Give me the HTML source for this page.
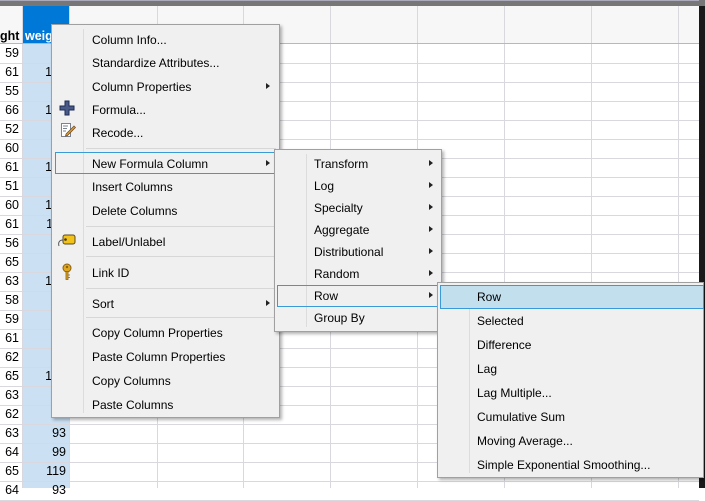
<!DOCTYPE html>
<html><head><meta charset="utf-8"><style>
*{margin:0;padding:0;box-sizing:border-box}
body{width:705px;height:488px;overflow:hidden;background:#fff;position:relative;font-family:"Liberation Sans",sans-serif;font-size:12px;color:#000}
.a{position:absolute}
.vl{position:absolute;top:6px;width:1px;height:482px;background:#d8d8de}
.hl{position:absolute;left:0;width:699px;height:1px;background:#d8d8de}
.n{position:absolute;text-align:right;font-size:12.5px;line-height:19px;height:19px}
.menu{position:absolute;background:#f0f0f0;border:1px solid #a0a0a0;box-shadow:2px 2px 3px rgba(0,0,0,.3)}
.it{position:absolute;font-size:12px;line-height:16px;white-space:nowrap}
.ar{position:absolute;width:0;height:0;border-top:3.5px solid transparent;border-bottom:3.5px solid transparent;border-left:4px solid #222}
.sep{position:absolute;height:1px;background:#d7d7d7}
</style></head><body>
<div class="a" style="left:0;top:0;width:705px;height:6px;background:#777"></div>
<div class="a" style="left:0;top:0;width:705px;height:1px;background:#aab"></div>
<div class="a" style="left:0;top:6px;width:699px;height:38px;background:#f7f7f7"></div>
<div class="a" style="left:22px;top:6px;width:47px;height:38px;background:#0078d7"></div>
<div class="a" style="left:22px;top:44px;width:47px;height:444px;background:#cce0f3"></div>
<div class="a" style="left:0;top:29px;font-weight:bold;font-size:12.5px">ght</div>
<div class="a" style="left:25px;top:29px;font-weight:bold;font-size:12.5px;color:#fff">weig</div>
<div class="vl" style="left:22px"></div><div class="vl" style="left:69px"></div><div class="vl" style="left:157px"></div><div class="vl" style="left:243px"></div><div class="vl" style="left:330px"></div><div class="vl" style="left:417px"></div><div class="vl" style="left:504px"></div><div class="vl" style="left:591px"></div><div class="vl" style="left:678px"></div>
<div class="a" style="left:0;top:43px;width:699px;height:1px;background:#b8b8b8"></div>
<div id="rows"></div>
<div class="a" style="left:699px;top:0;width:6px;height:488px;background:#1a1a1a"></div>
<div class="a" style="left:699px;top:0;width:6px;height:6px;background:#777"></div>

<!-- main menu -->
<div class="menu" style="left:51px;top:24px;width:229px;height:394px">
<div class="a" style="left:31px;top:4px;width:1px;height:384px;background:#dcdcdc"></div>
<div class="it" style="left:40px;top:7px">Column Info...</div>
<div class="it" style="left:40px;top:30px">Standardize Attributes...</div>
<div class="it" style="left:40px;top:54px">Column Properties</div><div class="ar" style="left:214px;top:58px"></div>
<svg class="a" style="left:7px;top:75px" width="16" height="16" viewBox="0 0 16 16"><path d="M6 1h4v5h5v4h-5v5H6v-5H1V6h5z" fill="#4a5a88" stroke="#1e2a55" stroke-width="1"/></svg>
<div class="it" style="left:40px;top:77px">Formula...</div>
<svg class="a" style="left:8px;top:97px" width="16" height="16" viewBox="0 0 16 16"><rect x="1.5" y="1.5" width="9" height="13" fill="#fff" stroke="#7a8290"/><path d="M3 4h5M3 6.5h4M3 9h3" stroke="#7a8290"/><path d="M6 12l8-8 1.5 1.5-8 8-2 .5z" fill="#d89a3a" stroke="#6a4a20" stroke-width=".7"/></svg>
<div class="it" style="left:40px;top:100px">Recode...</div>
<div class="sep" style="left:34px;top:123px;width:190px"></div>
<div class="a" style="left:3px;top:127px;width:220px;height:22px;border:1px solid #3a9ad8"></div>
<div class="it" style="left:40px;top:131px">New Formula Column</div><div class="ar" style="left:214px;top:135px"></div>
<div class="it" style="left:40px;top:154px">Insert Columns</div>
<div class="it" style="left:40px;top:178px">Delete Columns</div>
<div class="sep" style="left:34px;top:201px;width:190px"></div>
<svg class="a" style="left:5px;top:207px" width="20" height="16" viewBox="0 0 20 16"><rect x="6" y="3" width="12" height="9" rx="2" fill="#f2c21a" stroke="#5a4a20"/><circle cx="8.5" cy="7.5" r="1.3" fill="#333"/><path d="M6 8C2 8 1 11 2 14" fill="none" stroke="#555"/></svg>
<div class="it" style="left:40px;top:209px">Label/Unlabel</div>
<div class="sep" style="left:34px;top:231px;width:190px"></div>
<svg class="a" style="left:8px;top:238px" width="14" height="18" viewBox="0 0 14 18"><circle cx="7" cy="5" r="4" fill="#e0a820" stroke="#8a6010"/><circle cx="7" cy="4" r="1.2" fill="#8a6010"/><path d="M6 8.5h2v8H6zM8 12h2M8 14.5h2" stroke="#8a6010" fill="#e0a820" stroke-width=".8"/></svg>
<div class="it" style="left:40px;top:240px">Link ID</div>
<div class="sep" style="left:34px;top:263px;width:190px"></div>
<div class="it" style="left:40px;top:271px">Sort</div><div class="ar" style="left:214px;top:275px"></div>
<div class="sep" style="left:34px;top:292px;width:190px"></div>
<div class="it" style="left:40px;top:300px">Copy Column Properties</div>
<div class="it" style="left:40px;top:324px">Paste Column Properties</div>
<div class="it" style="left:40px;top:348px">Copy Columns</div>
<div class="it" style="left:40px;top:372px">Paste Columns</div>
</div>

<!-- submenu 1 -->
<div class="menu" style="left:274px;top:149px;width:168px;height:183px">
<div class="a" style="left:31px;top:4px;width:1px;height:173px;background:#dcdcdc"></div>
<div class="it" style="left:39px;top:6px">Transform</div><div class="ar" style="left:154px;top:10px"></div>
<div class="it" style="left:39px;top:28px">Log</div><div class="ar" style="left:154px;top:32px"></div>
<div class="it" style="left:39px;top:50px">Specialty</div><div class="ar" style="left:154px;top:54px"></div>
<div class="it" style="left:39px;top:72px">Aggregate</div><div class="ar" style="left:154px;top:76px"></div>
<div class="it" style="left:39px;top:94px">Distributional</div><div class="ar" style="left:154px;top:98px"></div>
<div class="it" style="left:39px;top:116px">Random</div><div class="ar" style="left:154px;top:120px"></div>
<div class="a" style="left:2px;top:135px;width:162px;height:22px;border:1px solid #3a9ad8"></div>
<div class="it" style="left:39px;top:138px">Row</div><div class="ar" style="left:154px;top:142px"></div>
<div class="it" style="left:39px;top:160px">Group By</div>
</div>

<!-- submenu 2 -->
<div class="menu" style="left:437px;top:282px;width:267px;height:196px">
<div class="a" style="left:31px;top:4px;width:1px;height:186px;background:#dcdcdc"></div>
<div class="a" style="left:2px;top:2px;width:264px;height:24px;border:1px solid #3a9ad8;background:#c2dfee"></div>
<div class="it" style="left:39px;top:6px">Row</div>
<div class="it" style="left:39px;top:30px">Selected</div>
<div class="it" style="left:39px;top:54px">Difference</div>
<div class="it" style="left:39px;top:78px">Lag</div>
<div class="it" style="left:39px;top:102px">Lag Multiple...</div>
<div class="it" style="left:39px;top:126px">Cumulative Sum</div>
<div class="it" style="left:39px;top:150px">Moving Average...</div>
<div class="it" style="left:39px;top:174px">Simple Exponential Smoothing...</div>
</div>

<script>
var h=[59,61,55,66,52,60,61,51,60,61,56,65,63,58,59,61,62,65,63,62,63,64,65,64];
var w=[95,125,90,140,88,92,130,85,120,110,95,96,150,98,99,97,96,160,95,97,93,99,119,93];
var s='';
for(var i=0;i<h.length;i++){var y=44+i*19;
s+='<div class="hl" style="top:'+(y+19)+'px"></div>';
s+='<div class="n" style="left:0;width:19px;top:'+y+'px">'+h[i]+'</div>';
s+='<div class="n" style="left:22px;width:44px;top:'+y+'px">'+w[i]+'</div>';}
document.getElementById('rows').innerHTML=s;
</script>
</body></html>
